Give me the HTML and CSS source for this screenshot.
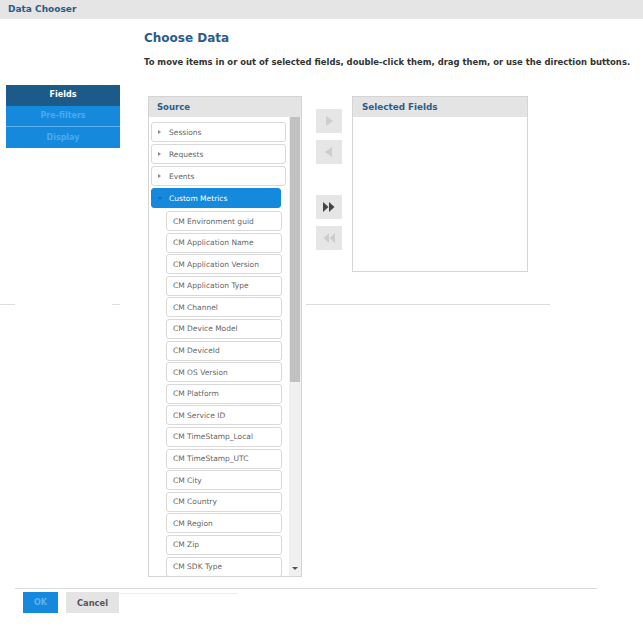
FILE: index.html
```html
<!DOCTYPE html>
<html>
<head>
<meta charset="utf-8">
<title>Data Chooser</title>
<link rel="stylesheet" href="styles.css">
</head>
<body>
<div class="titlebar">Data Chooser</div>
<div class="page">
  <aside class="side">
    <nav class="tabs">
      <div class="tab active">Fields</div>
      <div class="tab">Pre-filters</div>
      <div class="tab tab-sep">Display</div>
    </nav>
    <div class="side-rules"><span class="seg-a"></span><span class="seg-b"></span></div>
  </aside>
  <main class="content">
    <h1 class="title">Choose Data</h1>
    <p class="hint">To move items in or out of selected fields, double-click them, drag them, or use the direction buttons.</p>
    <div class="chooser">
      <section class="source">
        <div class="panel-head">Source</div>
        <div class="source-body">
          <ul class="tree">
            <li class="node"><span class="caret"></span>Sessions</li>
            <li class="node"><span class="caret"></span>Requests</li>
            <li class="node"><span class="caret"></span>Events</li>
            <li class="node open"><span class="caret down"></span>Custom Metrics</li>
            <li class="leaf">CM Environment guid</li>
            <li class="leaf">CM Application Name</li>
            <li class="leaf">CM Application Version</li>
            <li class="leaf">CM Application Type</li>
            <li class="leaf">CM Channel</li>
            <li class="leaf">CM Device Model</li>
            <li class="leaf">CM DeviceId</li>
            <li class="leaf">CM OS Version</li>
            <li class="leaf">CM Platform</li>
            <li class="leaf">CM Service ID</li>
            <li class="leaf">CM TimeStamp_Local</li>
            <li class="leaf">CM TimeStamp_UTC</li>
            <li class="leaf">CM City</li>
            <li class="leaf">CM Country</li>
            <li class="leaf">CM Region</li>
            <li class="leaf">CM Zip</li>
            <li class="leaf">CM SDK Type</li>
          </ul>
          <div class="scrollbar"><div class="thumb"></div><div class="down-arrow"></div></div>
        </div>
      </section>
      <div class="right">
        <div class="right-top">
          <div class="arrows">
            <button class="arrow a1"><svg width="8" height="10" viewBox="0 0 8 10"><polygon points="0,0 7,5 0,10" fill="#cdcdcd"/></svg></button>
            <button class="arrow a2"><svg width="8" height="10" viewBox="0 0 8 10"><polygon points="8,0 1,5 8,10" fill="#cdcdcd"/></svg></button>
            <button class="arrow a3"><svg width="12" height="10" viewBox="0 0 12 10"><polygon points="0,0 5.5,5 0,10" fill="#454545"/><polygon points="6,0 11.5,5 6,10" fill="#454545"/></svg></button>
            <button class="arrow a4"><svg width="12" height="10" viewBox="0 0 12 10"><polygon points="6,0 0.5,5 6,10" fill="#cdcdcd"/><polygon points="12,0 6.5,5 12,10" fill="#cdcdcd"/></svg></button>
          </div>
          <section class="selected">
            <div class="panel-head sel-head">Selected Fields</div>
            <div class="selected-body"></div>
          </section>
        </div>
        <div class="rule"></div>
      </div>
    </div>
  </main>
</div>
<footer class="footer">
  <button class="btn ok">OK</button>
  <button class="btn cancel">Cancel</button>
  <span class="toolbar-line"></span>
</footer>
</body>
</html>
```

FILE: styles.css
```css
* { box-sizing: border-box; }
body {
  margin: 0;
  width: 643px;
  background: #fff;
  font-family: "DejaVu Sans", Verdana, sans-serif;
}
.titlebar {
  height: 19px;
  line-height: 19px;
  background: #e5e5e5;
  color: #2a5a86;
  font-size: 9px;
  font-weight: bold;
  padding-left: 8px;
}
.page { display: flex; }
.side { width: 120px; flex: none; }
.tabs { margin: 66px 0 0 6px; }
.tab {
  height: 20px;
  line-height: 20px;
  text-align: center;
  font-size: 8px;
  font-weight: bold;
  background: #1589dc;
  color: #4ba9ef;
}
.tab.active { background: #1c5a8a; color: #fff; height: 21px; line-height: 20px; }
.tab-sep { border-top: 1px solid #5cb2ee; height: 22px; line-height: 21px; }
.side-rules {
  margin-top: 156px;
  display: flex;
  justify-content: space-between;
}
.seg-a { width: 15px; height: 1px; background: #dedede; }
.seg-b { width: 8px; height: 1px; background: #dedede; }

.content { margin-left: 24px; }
.title {
  margin: 12px 0 0;
  font-size: 12px;
  line-height: 14px;
  font-weight: bold;
  color: #2c5d8a;
}
.hint {
  margin: 12px 0 0;
  font-size: 8.45px;
  line-height: 10px;
  font-weight: bold;
  color: #333;
  white-space: nowrap;
}
.chooser { display: flex; margin: 29px 0 0 4px; }

.source {
  width: 154px;
  height: 481px;
  display: flex;
  flex-direction: column;
}
.panel-head {
  height: 21px;
  line-height: 20px;
  background: #e4e4e4;
  border: 1px solid #d4d4d4;
  border-bottom: none;
  padding-left: 8px;
  font-size: 8.5px;
  font-weight: bold;
  color: #2c5d8a;
}
.source-body {
  flex: 1;
  min-height: 0;
  display: flex;
  border: 1px solid #d4d4d4;
  border-top: none;
  overflow: hidden;
}
.tree {
  width: 140px;
  flex: none;
  list-style: none;
  margin: 0;
  padding: 5px 0 0 2px;
  overflow: hidden;
}
.node, .leaf {
  height: 20px;
  display: flex;
  align-items: center;
  border: 1px solid #d9d9d9;
  border-radius: 3px;
  background: #fff;
  font-size: 7.5px;
  color: #666;
  white-space: nowrap;
}
.node { width: 135px; margin-bottom: 2px; padding-left: 6px; }
.caret {
  width: 0;
  height: 0;
  border-left: 3px solid #8a8a8a;
  border-top: 2px solid transparent;
  border-bottom: 2px solid transparent;
  margin-right: 8px;
}
.node.open {
  width: 130px;
  margin-bottom: 3px;
  background: #1589dc;
  border-color: #1589dc;
  color: #fff;
}
.caret.down {
  border-left: 2px solid transparent;
  border-right: 2px solid transparent;
  border-top: 3px solid #0e6cb5;
  border-bottom: none;
  margin-right: 7px;
}
.leaf {
  width: 116px;
  margin: 0 0 1.6px 15px;
  padding-left: 6px;
}
.scrollbar {
  width: 12px;
  flex: none;
  background: #f0f0f0;
  display: flex;
  flex-direction: column;
  align-items: center;
  justify-content: space-between;
  padding-bottom: 6px;
}
.thumb { width: 10px; height: 265px; background: #c1c1c1; }
.down-arrow {
  width: 0;
  height: 0;
  border-left: 3px solid transparent;
  border-right: 3px solid transparent;
  border-top: 3px solid #505050;
}

.right { margin-left: 4px; width: 244px; }
.right-top { display: flex; padding-left: 10px; align-items: flex-start; }
.arrows { display: flex; flex-direction: column; padding-top: 13px; width: 26px; }
.arrow {
  width: 26px;
  height: 24px;
  padding: 0;
  border: none;
  background: #e6e6e6;
  display: flex;
  align-items: center;
  justify-content: center;
}
.a1 svg { margin-left: 2px; }
.a2 svg { margin-left: -2px; }
.a2, .a4 { margin-top: 7px; }
.a3 { margin-top: 31px; }
.selected { margin-left: 10px; width: 176px; height: 176px; display: flex; flex-direction: column; }
.sel-head { padding-left: 9px; font-size: 8.8px; }
.selected-body { flex: 1; border: 1px solid #d4d4d4; border-top: none; background: #fff; }
.rule { margin-top: 32px; height: 1px; background: #dcdcdc; }

.footer {
  margin: 11px 0 0 15px;
  width: 582px;
  border-top: 1px solid #dcdcdc;
  display: flex;
  align-items: flex-start;
  padding: 3px 0 0 8px;
}
.btn {
  height: 21px;
  border: none;
  padding: 0;
  font-family: "DejaVu Sans", Verdana, sans-serif;
  font-size: 8px;
  font-weight: bold;
}
.ok { width: 35px; background: #1589dc; color: #5db4f1; }
.cancel { width: 53px; margin-left: 8px; background: #e4e4e4; color: #555; font-size: 8.3px; }
.toolbar-line { width: 119px; border-top: 1px solid #ececec; margin-top: 1px; }
```
